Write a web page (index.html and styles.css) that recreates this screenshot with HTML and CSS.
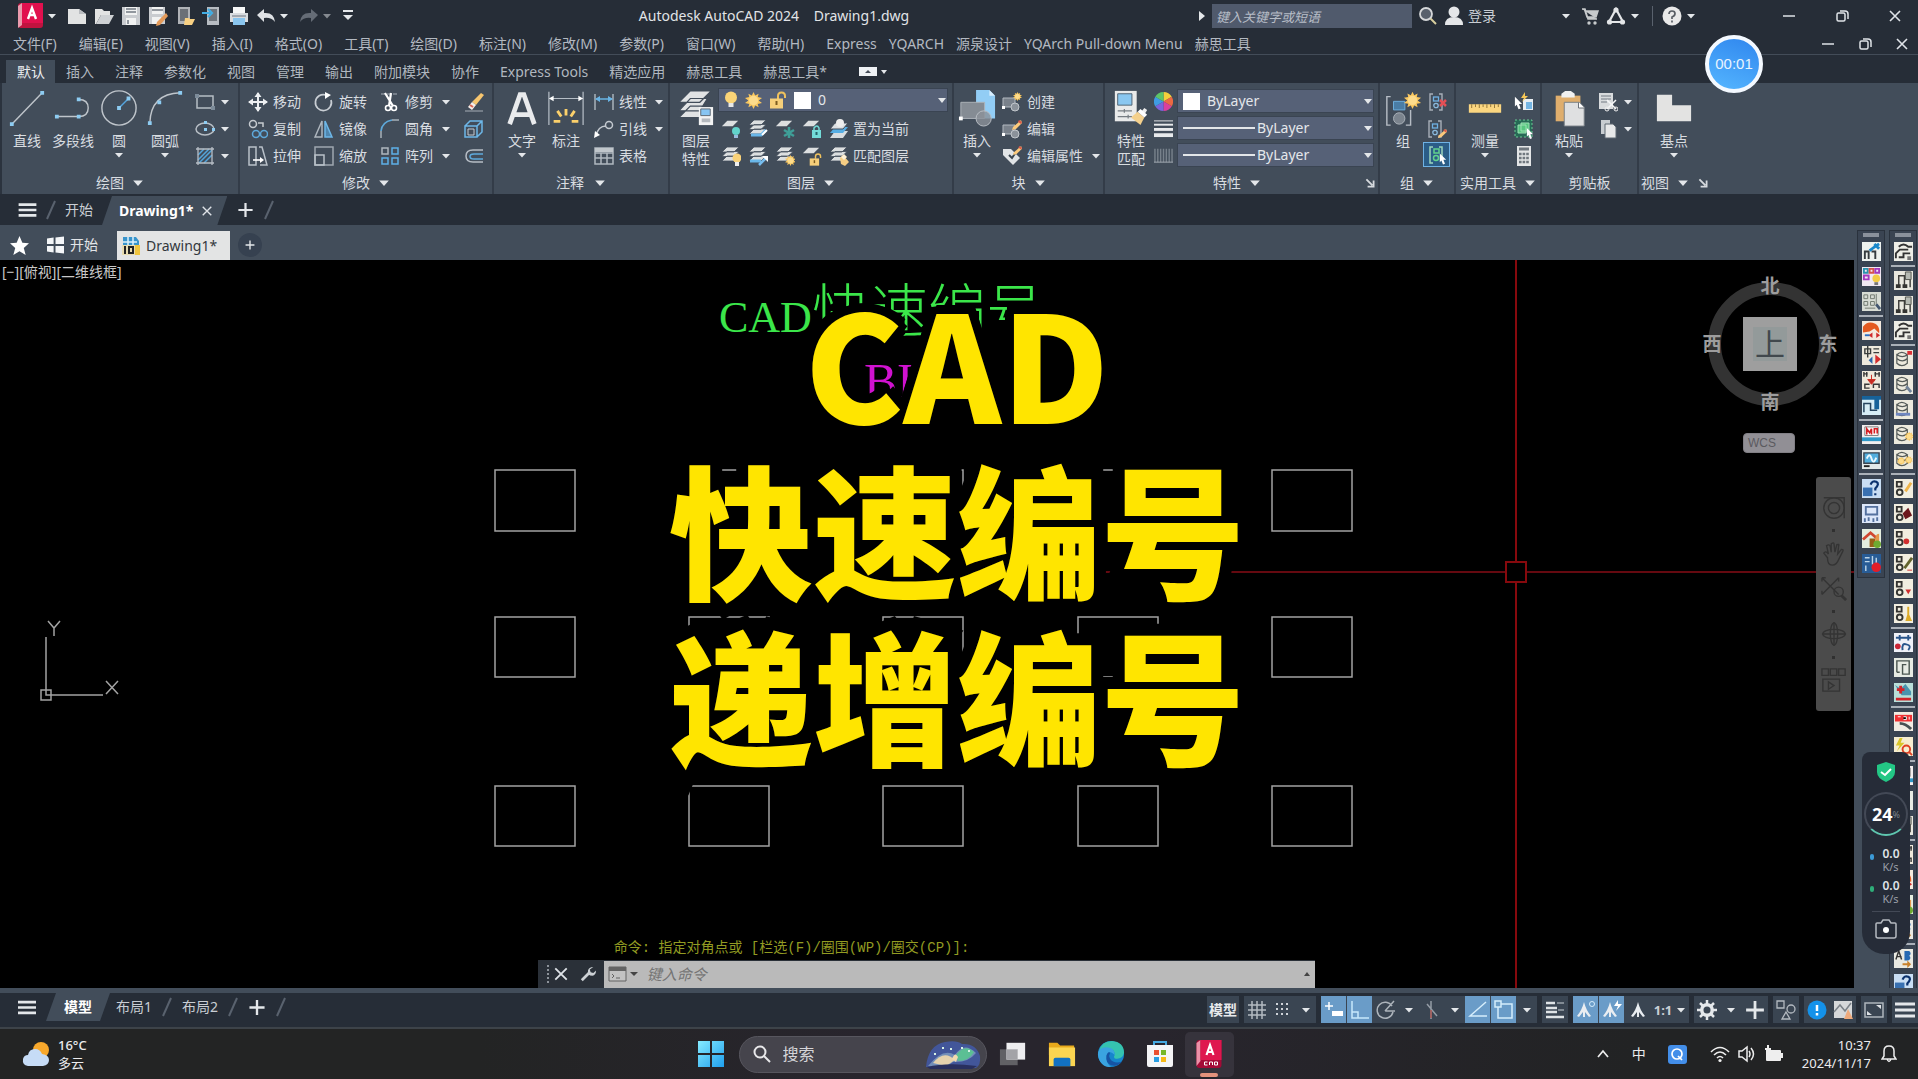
FILE: index.html
```html
<!DOCTYPE html>
<html lang="zh-CN">
<head>
	<meta charset="UTF-8">
	<meta name="viewport" content="width=device-width, initial-scale=1.0">
	<title>Autodesk AutoCAD 2024 - Drawing1.dwg</title>
	<link rel="stylesheet" href="styles.css">
</head>
<body>
	<!-- shared icon shapes -->
	<svg class="defs" width="0" height="0" aria-hidden="true">
		<symbol id="caret" viewBox="0 0 10 10"><path d="M1 3h8L5 7.500z" fill="#e4e7ea"/></symbol>
		<symbol id="plus" viewBox="0 0 18 18"><path d="M9 1v16M1 9h16" stroke="#e4e7ea" stroke-width="2.500"/></symbol>
		<symbol id="bars" viewBox="0 0 20 18"><path d="M0 3h20M0 9h20M0 15h20" stroke="#e4e7ea" stroke-width="3"/></symbol>
		<symbol id="slash" viewBox="0 0 10 20"><path d="M9 1L1 19" stroke="#59626e" stroke-width="2"/></symbol>
		<symbol id="cross" viewBox="0 0 14 14"><path d="M2 2l10 10M12 2L2 12" stroke="#dfe3e8" stroke-width="1.600"/></symbol>
		<symbol id="min" viewBox="0 0 14 14"><path d="M1 7h12" stroke="#dfe3e8" stroke-width="1.500"/></symbol>
		<symbol id="restore" viewBox="0 0 14 14"><rect x="2" y="4" width="8" height="8" rx="1.500" fill="none" stroke="#dfe3e8" stroke-width="1.500"/><path d="M5 2h5q3 0 3 3v5" fill="none" stroke="#dfe3e8" stroke-width="1.500"/></symbol>
		<symbol id="launch" viewBox="0 0 10 10"><path d="M2 2l5 5M8 3v5H3" fill="none" stroke="#d6dade" stroke-width="1.500"/></symbol>
		<symbol id="glass" viewBox="0 0 20 20"><circle cx="8" cy="8" r="6" fill="#59616d" stroke="#d6d8da" stroke-width="1.800"/><path d="M12.500 12.500L18 18" stroke="#d9cf9f" stroke-width="2"/></symbol>
		<symbol id="sheets" viewBox="0 0 20 20"><path d="M6 1h12l-5 5H1zM6 5.500h12l-5 5H1zM6 10h12l-5 5H1z" fill="#dcdfe0" stroke="#424d5a" stroke-width=".8"/></symbol>
		<symbol id="sheet" viewBox="0 0 20 20"><path d="M7 2h12l-6 6H1z" fill="#dcdfe0"/></symbol>
		<symbol id="bulb" viewBox="0 0 14 18"><circle cx="7" cy="6.500" r="6" fill="#fbd477"/><path d="M4.500 12h5v4h-5z" fill="#e8e8e8"/></symbol>
		<symbol id="sun" viewBox="0 0 20 20"><path d="M10 0l2 4 4-2-1 4 5 1-4 3 4 3-5 1 1 4-4-2-2 4-2-4-4 2 1-4-5-1 4-3-4-3 5-1-1-4 4 2z" fill="#f9c75f"/><circle cx="10" cy="10" r="5.500" fill="#fddc8c"/></symbol>
		<symbol id="lock" viewBox="0 0 18 18"><path d="M9 8V5q0-3.500 3.500-3.500T16 5v2" fill="none" stroke="#f0c25d" stroke-width="2"/><rect x="1" y="7.500" width="13" height="10" fill="#f6cf7a"/><path d="M7.500 10v4" stroke="#7c5b1f" stroke-width="2"/></symbol>
		<symbol id="pen" viewBox="0 0 10 10"><path d="M9 0L10 3 4 9 0 10 1 7z" fill="#fbc97b"/><path d="M7 0l3 2-1 2-3-2z" fill="#d95a4a"/></symbol>
		<symbol id="grp" viewBox="0 0 14 18"><path d="M4 1H1v16h3M10 1h3v16h-3" fill="none" stroke="#a8afb8" stroke-width="1.400"/><rect x="4.500" y="4" width="5" height="4" fill="none" stroke="#6fb0e2" stroke-width="1.300"/><circle cx="7" cy="12.500" r="2.200" fill="none" stroke="#8ab9dd" stroke-width="1.300"/></symbol>
		<symbol id="cursor" viewBox="0 0 10 14"><path d="M1 0l8 8H5.500l2 5-2.500 1-2-5L1 11z" fill="#fff"/></symbol>
		<symbol id="annot" viewBox="0 0 20 20"><path d="M10 2q2 8 7 14l-2 1-4-5v5H9v-5l-4 5-2-1q5-6 7-14z" fill="#e9edf1"/></symbol>
		<!-- plugin toolbar glyphs -->
		<symbol id="t-trim" viewBox="0 0 20 20"><path d="M0 0h20v20H0z" fill="#eef2ee"/><path d="M3 18v-8h4v8M10 10h4v8" stroke="#353b3e" stroke-width="2" fill="none"/><path d="M8 9q4-3 10-7M13 2l5 5" stroke="#1787ca" stroke-width="3"/></symbol>
		<symbol id="t-colors" viewBox="0 0 20 20"><path d="M0 0h20v20H0z" fill="#f1e9f3"/><path d="M2 2h4v4H2z" stroke="#2a93ad" stroke-width="2" fill="none"/><path d="M8 2h4v4H8z" stroke="#d6524a" stroke-width="2" fill="none"/><path d="M14 2h4v4h-4zM2 9h5v4H2z" stroke="#a339be" stroke-width="2" fill="none"/><circle cx="15" cy="12" r="4" fill="#f2cb45"/><path d="M13 16h4v3h-4z" fill="#777"/></symbol>
		<symbol id="t-grid" viewBox="0 0 20 20"><path d="M0 0h20v20H0z" fill="#d8dcd4"/><path d="M2 3h4v4H2zM9 3h4v4H9zM2 10h4v4H2zM9 10h4v4H9zM15 2v12M3 17h11" stroke="#70786f" fill="none"/><path d="M15 13l4 5" stroke="#43566f" stroke-width="3"/></symbol>
		<symbol id="t-orange" viewBox="0 0 20 20"><path d="M0 0h20v20H0z" fill="#f4eade"/><path d="M1 12V6q5-7 13-3 5 3 4 10l-5-5-5 3z" fill="#e45a20"/><path d="M7 15l4-3v6zM19 15l-4-3v6z" fill="#cf2b2b"/><path d="M3 15h5" stroke="#286fc4" stroke-width="2"/></symbol>
		<symbol id="t-move" viewBox="0 0 20 20"><path d="M0 0h20v20H0z" fill="#eee9dd"/><path d="M3 3h6v5H3zM6 0v12M12 3h6M12 7h6" stroke="#3a3d3c" stroke-width="1.500" fill="none"/><path d="M7 15l4-4v8z" fill="#2b64aa"/><path d="M20 14l-6-5v10z" fill="#d32d2d"/></symbol>
		<symbol id="t-down" viewBox="0 0 20 20"><path d="M0 0h20v20H0z" fill="#efe9db"/><path d="M2 1v5M5 1v5M14 1v5M18 1v5M2 3h4M13 3h6M8 14H3v4h5M12 18v-4h6v4" stroke="#383838" stroke-width="1.500" fill="none"/><path d="M10 4v7M6 9h8l-4 5z" stroke="#c92c22" fill="#c92c22"/></symbol>
		<symbol id="t-window" viewBox="0 0 20 20"><path d="M0 0h20v20H0z" fill="#d7edf6"/><path d="M0 0h20v4H0zM13 4h5v10h-5z" fill="#17629a"/><path d="M2 17V8h7v7h7" stroke="#27455f" stroke-width="1.600" fill="none"/></symbol>
		<symbol id="t-text" viewBox="0 0 20 20"><path d="M0 0h20v20H0z" fill="#f3eeee"/><path d="M3 2h14v9H3z" stroke="#777" fill="#fff"/><path d="M5 10V4l3 4 2-4v6M13 9V4h3v5" stroke="#d51f24" stroke-width="1.700" fill="none"/><path d="M0 15h20" stroke="#2e98c8" stroke-width="4"/></symbol>
		<symbol id="t-screen" viewBox="0 0 20 20"><path d="M0 0h20v20H0z" fill="#e4e9e9"/><path d="M2 3h16v11H2z" fill="#51aede" stroke="#3a4450" stroke-width="1.500"/><path d="M5 9q3-7 5 0t5-1" stroke="#e8f8ff" fill="none" stroke-width="2"/><path d="M2 17h6" stroke="#222" stroke-width="2"/></symbol>
		<symbol id="t-help" viewBox="0 0 20 20"><path d="M0 0h20v20H0z" fill="#c9def4"/><path d="M1 9h10v9H1z" fill="#3870b1"/><path d="M9 6q2-5 6-3t-1 7v2M14 15v2" stroke="#0b326e" stroke-width="2.300" fill="none"/></symbol>
		<symbol id="t-board" viewBox="0 0 20 20"><path d="M0 0h20v20H0z" fill="#dce7fa"/><path d="M4 3h12v8H4zM7 14v4M3 15v4M12 15v4M16 14v4" stroke="#54719f" stroke-width="2" fill="none"/></symbol>
		<symbol id="t-house" viewBox="0 0 20 20"><path d="M0 0h20v20H0z" fill="#e5eee0"/><path d="M1 11L9 4l8 7" stroke="#d14832" stroke-width="3" fill="none"/><path d="M8 10h6v9H8z" fill="#986019"/><path d="M14 14q-1-9 4-9v8" fill="#e5964a"/><circle cx="16" cy="16" r="4" fill="#6eaa31"/></symbol>
		<symbol id="t-record" viewBox="0 0 20 20"><path d="M0 0h20v20H0z" fill="#285c96"/><path d="M3 4h5M3 8h5M11 2v9M15 4v7M4 12v6" stroke="#bdd6e9" stroke-width="1.500"/><circle cx="15" cy="14" r="5" fill="#e21d28"/></symbol>
		<symbol id="t-link" viewBox="0 0 20 20"><path d="M0 0h20v20H0z" fill="#eeeee7"/><path d="M5 5q5-5 10 0h4M15 8H6l-4 4v5M17 12h-7v4H5" fill="none" stroke="#333" stroke-width="2"/><path d="M14 15h4v4h-4z" fill="#777"/></symbol>
		<symbol id="t-nodes" viewBox="0 0 20 20"><path d="M0 0h20v20H0z" fill="#e9e8df"/><path d="M5 16V5h6v10M11 8h6v9" fill="none" stroke="#3c3c39" stroke-width="1.500"/><path d="M2 14h5v4H2zM9 14h5v4H9z" fill="#343431"/><path d="M12 1h6v8h-6z" fill="#b5b9b2" stroke="#53554e"/></symbol>
		<symbol id="t-layers" viewBox="0 0 20 20"><path d="M0 0h20v20H0z" fill="#edeade"/><path d="M3 5q5-5 11 0-5 4-11 0v9q5 5 11 0V5M3 9q6 5 11 0" fill="none" stroke="#555b59" stroke-width="1.300"/></symbol>
		<symbol id="t-pair" viewBox="0 0 20 20"><path d="M0 0h20v20H0z" fill="#f2eee0"/><path d="M3 3h5v5H3z" fill="none" stroke="#343330" stroke-width="2"/><circle cx="6" cy="14" r="3" fill="none" stroke="#353531" stroke-width="2"/></symbol>
		<symbol id="t-blue" viewBox="0 0 20 20"><path d="M0 0h20v20H0z" fill="#eff1f8"/><path d="M2 5h16M6 2v6M15 2v6M9 18q-1-8 4-6 6 1 2 6" fill="none" stroke="#29558b" stroke-width="2"/><circle cx="4" cy="14" r="3" fill="#ca2637"/></symbol>
		<symbol id="t-rects" viewBox="0 0 20 20"><path d="M0 0h20v20H0z" fill="#e7ebe3"/><path d="M3 15V3h13v14H9V7h4M3 15h3" fill="none" stroke="#4b5650" stroke-width="1.500"/></symbol>
		<symbol id="t-map" viewBox="0 0 20 20"><path d="M0 0h20v20H0z" fill="#b9dfd9"/><path d="M1 2l6 4 5-5 6 8v4H8z" fill="#4a93ae"/><path d="M3 7h8M7 3v8M2 17h16" stroke="#d1242b" stroke-width="3"/></symbol>
		<symbol id="t-com" viewBox="0 0 20 20"><path d="M0 0h20v20H0z" fill="#f1ece3"/><path d="M1 3h18v7H1z" fill="#ef3033"/><path d="M4 5h3M10 5h3v3h-3M16 8V5" stroke="#fff"/><path d="M6 12q6 0 12 6" stroke="#485052" stroke-width="3" fill="none"/></symbol>
		<symbol id="t-find" viewBox="0 0 20 20"><path d="M0 0h20v20H0z" fill="#f6edcf"/><path d="M6 1l-4 8h4l-3 6 8-9H7l2-5" fill="#d9c628"/><circle cx="13" cy="13" r="4" fill="none" stroke="#e04022" stroke-width="2"/><path d="M16 16l3 3" stroke="#e04022" stroke-width="2"/></symbol>
		<symbol id="t-ab" viewBox="0 0 20 20"><path d="M0 0h20v20H0z" fill="#e9e9e2"/><path d="M2 11L5 2l3 9M3 8h5" stroke="#333" stroke-width="1.500" fill="none"/><path d="M11 2h5q3 3 0 5 3 3-1 5h-4z" fill="#2669b3"/><path d="M9 15h5v-3l4 4-4 4v-3H9z" fill="#c8812c"/></symbol>
	</svg>

	<header>
		<div class="titlebar">
			<div class="quick">
				<button class="logo" aria-label="应用程序菜单"><svg width="26" height="26" viewBox="0 0 26 26"><path d="M0 3Q0 0 3 0h22v22q0 3-3 3H3q-3 0-3-3z" fill="#c0133f"/><path d="M0 3l4-3v22l-4 3z" fill="#ea9bad"/><path d="M4 0h21v20H4z" fill="#e1104e"/><path d="M10 16l4-11 4 11M11 12h6" stroke="#fff" stroke-width="2.400" fill="none"/></svg></button>
				<svg class="caret"><use href="#caret"/></svg>
				<button aria-label="新建"><svg viewBox="0 0 20 20"><path d="M1 3h11l7 5v10H1z" fill="#e2e3e3"/><path d="M12 3v5h7" fill="#b9bcc0"/></svg></button>
				<button aria-label="打开"><svg viewBox="0 0 20 20"><path d="M1 3h7l2 2h6v4H7l-5 9H1z" fill="#e2e3e3"/><path d="M7 9h13l-5 9H2z" fill="#ced1d4"/></svg></button>
				<button aria-label="保存"><svg viewBox="0 0 20 20"><path d="M1 1h18v18H1z" fill="#c9ccd0"/><path d="M4 1h12v8H4zM5 12h10v7H5z" fill="#f1f2f2"/><path d="M5 3h10M5 6h10M7 14v4" stroke="#727982" stroke-width="1.500"/></svg></button>
				<button aria-label="另存为"><svg viewBox="0 0 20 20"><path d="M1 1h16v17H1z" fill="#c9ccd0"/><path d="M4 1h11v7H4zM4 11h9v7H4z" fill="#f1f2f2"/><path d="M4 4h11" stroke="#727982" stroke-width="1.500"/><path d="M18 7l2 3-8 9-4 1 1-4z" fill="#e49a59"/></svg></button>
				<button aria-label="打开云文件"><svg viewBox="0 0 20 20"><path d="M3 1h12v17H3z" fill="#b0b3b7"/><path d="M5 3h8v12H5z" fill="#6b7077"/><path d="M10 12h4l1 1h5l-3 6h-8z" fill="#f7d083"/></svg></button>
				<button aria-label="保存到云"><svg viewBox="0 0 20 20"><path d="M5 1h12v18H5z" fill="#b7bcc2"/><path d="M7 3h8v12H7z" fill="#70767d"/><path d="M0 7h8M6 3l4 4-4 4" stroke="#42aee4" stroke-width="2.200" fill="none"/></svg></button>
				<button aria-label="打印"><svg viewBox="0 0 20 20"><path d="M4 1h12v6H4z" fill="#f6f7f7"/><path d="M1 7h18v9H1z" fill="#d9dcdf"/><path d="M4 12h12v7H4z" fill="#8ac5ee"/><path d="M3 10h14" stroke="#6d7580"/></svg></button>
				<button aria-label="放弃"><svg viewBox="0 0 20 20"><path d="M8 3v4q10-1 11 9-4-5-11-4v4L1 9z" fill="#dfe2e5"/></svg></button>
				<svg class="caret"><use href="#caret"/></svg>
				<button aria-label="重做"><svg viewBox="0 0 20 20"><path d="M12 3v4Q2 6 1 16q4-5 11-4v4l7-7z" fill="#656c76"/></svg></button>
				<svg class="caret dim"><use href="#caret"/></svg>
				<svg width="12" height="14" viewBox="0 0 12 14"><path d="M1 2h10" stroke="#e4e7ea" stroke-width="2"/><path d="M1 6h10l-5 5z" fill="#e4e7ea"/></svg>
			</div>
			<div class="title">Autodesk AutoCAD 2024 &nbsp;&nbsp; Drawing1.dwg</div>
			<div class="infocenter">
				<svg width="8" height="12" viewBox="0 0 8 12"><path d="M1 1l6 5-6 5z" fill="#e4e7ea"/></svg>
				<input class="help-search" type="text" placeholder="键入关键字或短语" aria-label="搜索帮助">
				<button aria-label="搜索"><svg><use href="#glass"/></svg></button>
				<button class="login"><svg viewBox="0 0 20 20"><circle cx="10" cy="6" r="5.500" fill="#e4e6e8"/><path d="M1 19q0-8 9-8t9 8z" fill="#e4e6e8"/></svg>登录</button>
				<svg class="caret push"><use href="#caret"/></svg>
				<button aria-label="购物车"><svg viewBox="0 0 20 20"><path d="M2 3h3l3 10h9M5 5h13l-2 6H7z" fill="#c7cacc" stroke="#c7cacc" stroke-width="1.500"/><circle cx="9" cy="17" r="1.700" fill="#c7cacc"/><circle cx="15" cy="17" r="1.700" fill="#c7cacc"/></svg></button>
				<button aria-label="Autodesk App Store"><svg viewBox="0 0 20 20"><path d="M10 3L3 16h14z" fill="none" stroke="#e4e6e8" stroke-width="2.200"/><circle cx="10" cy="4" r="2.600" fill="#e4e6e8"/><circle cx="3.500" cy="16" r="2.600" fill="#e4e6e8"/><circle cx="16.500" cy="16" r="2.600" fill="#e4e6e8"/></svg></button>
				<svg class="caret"><use href="#caret"/></svg>
				<span class="vline"></span>
				<button aria-label="帮助"><svg viewBox="0 0 20 20"><circle cx="10" cy="10" r="9.500" fill="#e9e9e9"/><path d="M7 8q0-3 3-3t3 2.500-3 3.500v2M10 14.500v2" stroke="#585d64" stroke-width="1.700" fill="none"/></svg></button>
				<svg class="caret"><use href="#caret"/></svg>
			</div>
			<div class="winctl">
				<button aria-label="最小化"><svg><use href="#min"/></svg></button>
				<button aria-label="还原"><svg><use href="#restore"/></svg></button>
				<button aria-label="关闭"><svg><use href="#cross"/></svg></button>
			</div>
		</div>

		<nav class="menubar">
			<a href="#">文件(F)</a><a href="#">编辑(E)</a><a href="#">视图(V)</a><a href="#">插入(I)</a><a href="#">格式(O)</a><a href="#">工具(T)</a><a href="#">绘图(D)</a><a href="#">标注(N)</a><a href="#">修改(M)</a><a href="#">参数(P)</a><a href="#">窗口(W)</a><a href="#">帮助(H)</a><a href="#" class="tight">Express</a><a href="#" class="tight">YQARCH</a><a href="#" class="tight">源泉设计</a><a href="#" class="tight">YQArch Pull-down Menu</a><a href="#" class="tight">赫思工具</a>
			<div class="docctl">
				<button aria-label="最小化图形"><svg><use href="#min"/></svg></button>
				<button aria-label="还原图形"><svg><use href="#restore"/></svg></button>
				<button aria-label="关闭图形"><svg><use href="#cross"/></svg></button>
			</div>
		</nav>

		<nav class="tabs">
			<a href="#" class="active">默认</a><a href="#">插入</a><a href="#">注释</a><a href="#">参数化</a><a href="#">视图</a><a href="#">管理</a><a href="#">输出</a><a href="#">附加模块</a><a href="#">协作</a><a href="#">Express Tools</a><a href="#">精选应用</a><a href="#">赫思工具</a><a href="#">赫思工具*</a>
			<button class="collapse" aria-label="最小化功能区"><svg width="30" height="10" viewBox="0 0 30 10"><path d="M0 0h18v9H0z" fill="#eef1f4"/><path d="M6 6l3-3 3 3z" fill="#454d58"/><path d="M22 3h6l-3 4z" fill="#e4e7ea"/></svg></button>
		</nav>

		<div class="ribbon">
			<section class="panel p-draw">
				<div class="body">
					<button class="big"><svg viewBox="0 0 40 40"><path d="M4 37L36 4" stroke="#bfc5cb" stroke-width="1.500"/><path d="M2 35h4v4H2zM34 2h4v4h-4z" fill="#8dccf2"/></svg>直线</button>
					<button class="big"><svg viewBox="0 0 40 40"><path d="M3 29h23q10 0 10-9t-10-9" stroke="#bfc5cb" stroke-width="1.500" fill="none"/><path d="M1 27h4v4H1zM24 27h4v4h-4zM24 9h4v4h-4z" fill="#8dccf2"/></svg>多段线</button>
					<button class="big"><svg viewBox="0 0 40 40"><circle cx="20" cy="20" r="18" stroke="#bfc5cb" stroke-width="1.500" fill="none"/><path d="M20 20L30 10" stroke="#54a6df" stroke-width="1.500"/><path d="M18 18h4v4h-4zM28 8h4v4h-4z" fill="#8dccf2"/></svg>圆<svg class="caret"><use href="#caret"/></svg></button>
					<button class="big"><svg viewBox="0 0 40 40"><path d="M4 36Q5 5 36 4" stroke="#bfc5cb" stroke-width="1.500" fill="none"/><path d="M2 34h4v4H2zM12 12h4v4h-4zM34 2h4v4h-4z" fill="#8dccf2"/></svg>圆弧<svg class="caret"><use href="#caret"/></svg></button>
					<div class="rows r-icons">
						<button aria-label="矩形"><svg viewBox="0 0 20 20"><path d="M2 4h16v12H2z" fill="none" stroke="#b7bec5" stroke-width="1.500"/><path d="M0 2h4v4H0zM16 14h4v4h-4z" fill="#7c8b99"/></svg><svg class="caret"><use href="#caret"/></svg></button>
						<button aria-label="椭圆"><svg viewBox="0 0 20 20"><ellipse cx="10" cy="10" rx="9" ry="6" fill="none" stroke="#b7bec5" stroke-width="1.500"/><path d="M9 9h3v3H9zM9 2h3v3H9zM17 9h3v3h-3z" fill="#8dccf2"/></svg><svg class="caret"><use href="#caret"/></svg></button>
						<button aria-label="图案填充"><svg viewBox="0 0 20 20"><path d="M3 9l6-6M3 14L14 3M4 17L17 4M9 17l8-8" stroke="#53a5db" stroke-width="1.500"/><path d="M1 3h18M1 17h18M3 1v18M17 1v18" stroke="#b7bec5" stroke-width="1.300"/></svg><svg class="caret"><use href="#caret"/></svg></button>
					</div>
				</div>
				<h2>绘图<svg class="caret"><use href="#caret"/></svg></h2>
			</section>

			<section class="panel p-modify">
				<div class="body">
					<div class="rows">
						<button><svg viewBox="0 0 20 20"><path d="M10 1v18M1 10h18" stroke="#eef0f2" stroke-width="2"/><path d="M6.500 5L10 0l3.500 5zM6.500 15l3.500 5 3.500-5zM5 6.500L0 10l5 3.500zM15 6.500l5 3.500-5 3.500z" fill="#eef0f2"/></svg>移动</button>
						<button><svg viewBox="0 0 20 20"><circle cx="5" cy="5" r="3.500" fill="none" stroke="#c6cbd0" stroke-width="1.500"/><path d="M10 4h5v4" stroke="#c6cbd0" stroke-width="1.500" fill="none"/><circle cx="8" cy="15" r="3.500" fill="none" stroke="#5ea9db" stroke-width="1.500"/><circle cx="16" cy="15" r="3.500" fill="none" stroke="#5ea9db" stroke-width="1.500"/></svg>复制</button>
						<button><svg viewBox="0 0 20 20"><path d="M1 1h7v18H1zM11 1h3l5 18h-7" fill="none" stroke="#b9c1c9" stroke-width="1.500"/><path d="M5 14h8" stroke="#fff" stroke-width="1.600"/><path d="M12 11l4 3-4 3z" fill="#fff"/></svg>拉伸</button>
					</div>
					<div class="rows">
						<button><svg viewBox="0 0 20 20"><path d="M12 3a8 8 0 1 0 5 5" fill="none" stroke="#c9ced4" stroke-width="1.700"/><path d="M11 0l6 3-6 4z" fill="#fff"/></svg>旋转</button>
						<button><svg viewBox="0 0 20 20"><path d="M8 2v16H1z" fill="none" stroke="#aeb6be" stroke-width="1.500"/><path d="M11 2v16h7z" fill="#4f86ae" stroke="#6eb7e7" stroke-width="1.500"/></svg>镜像</button>
						<button><svg viewBox="0 0 20 20"><path d="M1 1h18v18H1z" fill="none" stroke="#9ea7b0" stroke-width="1.500"/><path d="M1 9h9v10H1z" fill="none" stroke="#b9c1c9" stroke-width="1.500"/></svg>缩放</button>
					</div>
					<div class="rows r-wide">
						<button><svg viewBox="0 0 20 20"><path d="M1 2h18" stroke="#a8b0b8" stroke-dasharray="4 2"/><path d="M5 1l8 13M11 1L9 14" stroke="#fff" stroke-width="2.200"/><circle cx="8" cy="16" r="2.500" fill="none" stroke="#fff" stroke-width="1.600"/><circle cx="14" cy="16" r="2.500" fill="none" stroke="#fff" stroke-width="1.600"/></svg>修剪<svg class="caret"><use href="#caret"/></svg></button>
						<button><svg viewBox="0 0 20 20"><path d="M1 19v-7" stroke="#a9b2ba" stroke-width="1.500"/><path d="M1 12Q2 3 12 1" fill="none" stroke="#5ea9db" stroke-width="1.700"/><path d="M12 1h7" stroke="#a9b2ba" stroke-width="1.500"/></svg>圆角<svg class="caret"><use href="#caret"/></svg></button>
						<button><svg viewBox="0 0 20 20"><path d="M2 2h6v6H2z" fill="none" stroke="#aeb6be" stroke-width="1.500"/><path d="M12 2h6v6h-6zM2 12h6v6H2zM12 12h6v6h-6z" fill="none" stroke="#5eb0e8" stroke-width="1.500"/></svg>阵列<svg class="caret"><use href="#caret"/></svg></button>
					</div>
					<div class="rows">
						<button aria-label="删除"><svg viewBox="0 0 20 20"><path d="M17 1l3 2-8 10-4-3z" fill="#f7c66f"/><path d="M8 10l4 3-4 5-4-3z" fill="#f6eee9"/><path d="M6 13l3 2" stroke="#db6552" stroke-width="2"/><path d="M1 19h18" stroke="#a6aeb5"/></svg></button>
						<button aria-label="分解"><svg viewBox="0 0 20 20"><path d="M1 7h12v11H1zM1 7l5-5h12v11l-5 5M13 7l5-5" fill="none" stroke="#6db7e8" stroke-width="1.500"/><path d="M4 10h6v6H4z" fill="none" stroke="#c4c9ce"/></svg></button>
						<button aria-label="偏移"><svg viewBox="0 0 20 20"><path d="M19 4H9q-7 0-7 6t7 6h10" fill="none" stroke="#b6bdc5" stroke-width="1.500"/><path d="M19 8h-9q-4 0-4 2.500t4 2.500h9" fill="none" stroke="#5ea9db" stroke-width="1.500"/></svg></button>
					</div>
				</div>
				<h2>修改<svg class="caret"><use href="#caret"/></svg></h2>
			</section>

			<section class="panel p-annot">
				<div class="body">
					<button class="big"><svg viewBox="0 0 40 40"><path d="M7 37L18 6h4l11 31M12 27h16" fill="none" stroke="#e9ebed" stroke-width="5"/></svg>文字<svg class="caret"><use href="#caret"/></svg></button>
					<button class="big"><svg viewBox="0 0 40 40"><path d="M2 3v35M38 3v35M3 10h34" stroke="#b6bec6" stroke-width="1.300"/><path d="M2 10l5-3v6zM38 10l-5-3v6z" fill="#fff"/><path d="M20 21v7M11 23l4 6M29 23l-4 6M7 34h7M33 34h-7" stroke="#fbd06b" stroke-width="3"/></svg>标注</button>
					<div class="rows r-wide">
						<button><svg viewBox="0 0 20 20"><path d="M1 2v16M19 2v16" stroke="#a9b2ba" stroke-width="1.500"/><path d="M2 7h16" stroke="#69b4e5" stroke-width="1.500"/><path d="M1 7l5-3v6zM19 7l-5-3v6z" fill="#69b4e5"/></svg>线性<svg class="caret"><use href="#caret"/></svg></button>
						<button><svg viewBox="0 0 20 20"><path d="M2 17q2-10 10-10" fill="none" stroke="#c4cad0" stroke-width="1.500"/><circle cx="15" cy="6" r="3.500" fill="none" stroke="#c4cad0" stroke-width="1.500"/><path d="M0 19l1-7 5 4z" fill="#fff"/></svg>引线<svg class="caret"><use href="#caret"/></svg></button>
						<button><svg viewBox="0 0 20 20"><path d="M1 2h18v16H1zM1 7h18M7 7v11M13 7v11M1 12h18" fill="none" stroke="#b0b8c0" stroke-width="1.500"/><path d="M1 2h18v4H1z" fill="#c0c6cb"/></svg>表格</button>
					</div>
				</div>
				<h2>注释<svg class="caret"><use href="#caret"/></svg></h2>
			</section>

			<section class="panel p-layer">
				<div class="body">
					<button class="big"><svg viewBox="0 0 40 40"><path d="M14 2h22L24 14H2zM14 10h18L24 23H2zM14 18h14l-4 12H2z" fill="#e1e3e4" stroke="#424d5a" stroke-width="1.300"/><path d="M23 19h15v19H23z" fill="#f2f3f3"/><path d="M25 21h10v7H25z" fill="#87c5f2" stroke="#5e6873"/><path d="M26 31h9v4h-9z" fill="#b4b9be"/></svg>图层<br>特性</button>
					<div class="layer-tools">
						<div class="combo">
							<svg width="14" height="18"><use href="#bulb"/></svg><svg width="17" height="17"><use href="#sun"/></svg><svg width="18" height="18"><use href="#lock"/></svg><span class="swatch"></span>
							<select aria-label="图层"><option>0</option></select>
						</div>
						<div class="iconrow">
							<button aria-label="关闭图层"><svg viewBox="0 0 20 20"><use href="#sheet" width="18" height="18"/><circle cx="15" cy="12" r="4" fill="#62d3cb"/><path d="M13 16h4v3h-4z" fill="#9bd"/></svg></button>
							<button aria-label="隔离图层"><svg viewBox="0 0 20 20"><use href="#sheets"/><path d="M3 16h10l5-5" stroke="#69b7e9" stroke-width="3" fill="none"/><path d="M19 11l-5 5" stroke="#fff" stroke-width="2"/></svg></button>
							<button aria-label="冻结图层"><svg viewBox="0 0 20 20"><use href="#sheet" width="18" height="18"/><path d="M14 8v11M9 11l10 6M19 11L9 17" stroke="#3f9f98" stroke-width="2.500"/></svg></button>
							<button aria-label="锁定图层"><svg viewBox="0 0 20 20"><use href="#sheet" width="18" height="18"/><path d="M12 12V9q3-4 5 0v3" stroke="#73dcd9" stroke-width="1.500" fill="none"/><path d="M10 11h9v8h-9z" fill="#73dcd9"/><path d="M14.500 13v3" stroke="#24666a" stroke-width="2"/></svg></button>
							<button><svg viewBox="0 0 20 20"><path d="M6 12h13l-5 7H1z" fill="#d9dde0"/><path d="M6 8h13l-5 6H1z" fill="#57aee4"/><path d="M6 4h13l-5 6H1z" fill="#dce0e3" stroke="#424d5a"/><circle cx="11" cy="4" r="4" fill="#ededed"/></svg>置为当前</button>
						</div>
						<div class="iconrow">
							<button aria-label="打开所有图层"><svg viewBox="0 0 20 20"><use href="#sheets"/><circle cx="16" cy="12" r="4.500" fill="#f9d279"/><path d="M14 16h4v4h-4z" fill="#eee"/></svg></button>
							<button aria-label="取消隔离"><svg viewBox="0 0 20 20"><use href="#sheets"/><path d="M2 15h11" stroke="#69b7e9" stroke-width="3"/><path d="M11 19l8-8" stroke="#77bdee" stroke-width="2.500"/><path d="M14 10h6v6z" fill="#fff"/></svg></button>
							<button aria-label="解冻图层"><svg viewBox="0 0 20 20"><use href="#sheets"/><use href="#sun" x="10" y="9" width="11" height="11"/></svg></button>
							<button aria-label="解锁图层"><svg viewBox="0 0 20 20"><use href="#sheet" width="18" height="18"/><use href="#lock" x="7" y="7" width="13" height="13"/></svg></button>
							<button><svg viewBox="0 0 20 20"><use href="#sheets"/><path d="M11 12l3-3 6 7-4 4-4-2z" fill="#f6ce84"/><path d="M12 11l3-3 3 3-3 3z" fill="#fff1d6"/></svg>匹配图层</button>
						</div>
					</div>
				</div>
				<h2>图层<svg class="caret"><use href="#caret"/></svg></h2>
			</section>

			<section class="panel p-block">
				<div class="body">
					<button class="big"><svg viewBox="0 0 40 40"><path d="M19 1h14l6 6v24H19z" fill="#92cdf5"/><path d="M33 1v6h6z" fill="#d9efff"/><path d="M3 14h25v17H3z" fill="#858c94" stroke="#adb3b9"/><circle cx="27" cy="31" r="8" fill="#8b9199" fill-opacity=".8" stroke="#b9bfc5"/><path d="M1 29h4v4H1z" fill="#fff"/></svg>插入<svg class="caret"><use href="#caret"/></svg></button>
					<div class="rows r-wide">
						<button><svg viewBox="0 0 20 20"><path d="M1 6h12v9H1z" fill="#79818b" stroke="#b2b9c0"/><circle cx="13" cy="15" r="4" fill="#8b929a" stroke="#c1c6cb"/><use href="#sun" x="11" y="0" width="9" height="9"/><path d="M0 14h3v3H0z" fill="#fff"/></svg>创建</button>
						<button><svg viewBox="0 0 20 20"><path d="M1 6h12v9H1z" fill="#79818b" stroke="#b2b9c0"/><circle cx="13" cy="15" r="4" fill="#8b929a" stroke="#c1c6cb"/><use href="#pen" x="10" y="1" width="10" height="10"/><path d="M0 14h3v3H0z" fill="#fff"/></svg>编辑</button>
						<button><svg viewBox="0 0 20 20"><path d="M1 3h8l9 9-7 7L1 9z" fill="#e1e4e6"/><path d="M7 9l3 3 4-6" fill="none" stroke="#39444e" stroke-width="2"/><use href="#pen" x="11" y="0" width="9" height="9"/></svg>编辑属性<svg class="caret"><use href="#caret"/></svg></button>
					</div>
				</div>
				<h2>块<svg class="caret"><use href="#caret"/></svg></h2>
			</section>

			<section class="panel p-props">
				<div class="body">
					<button class="big"><svg viewBox="0 0 40 40"><path d="M3 2h23v32H3z" fill="#e9eaea"/><path d="M6 5h15v12H6z" fill="#8ac7f0" stroke="#4d6171"/><path d="M6 23h15M6 29h15M13 21v4M17 27v4" stroke="#777d83" stroke-width="1.300"/><path d="M30 25l4-5 3 2-3 5z" fill="#eee"/><path d="M27 24l7 6-4 8-10-8z" fill="#f4d08c"/><path d="M27 24l3-3 7 6-3 3z" fill="#fff"/></svg>特性<br>匹配</button>
					<div class="prop-grid">
						<svg class="wheel" viewBox="0 0 20 20"><path d="M10 10L10 0A10 10 0 0 1 18.700 5z" fill="#f4cf3b"/><path d="M10 10L18.700 5A10 10 0 0 1 18.700 15z" fill="#ec6942"/><path d="M10 10L18.700 15A10 10 0 0 1 10 20z" fill="#db3f9c"/><path d="M10 10V20A10 10 0 0 1 1.300 15z" fill="#7a63dc"/><path d="M10 10L1.300 15A10 10 0 0 1 1.300 5z" fill="#3f9be4"/><path d="M10 10L1.300 5A10 10 0 0 1 10 0z" fill="#5dc468"/></svg>
						<div class="combo"><span class="swatch"></span><select aria-label="颜色"><option>ByLayer</option></select></div>
						<svg viewBox="0 0 20 20"><path d="M0 2h20" stroke="#e8eaec"/><path d="M0 6h20" stroke="#e8eaec" stroke-width="2"/><path d="M0 11h20" stroke="#e8eaec" stroke-width="3"/><path d="M0 17h20" stroke="#e8eaec" stroke-width="4"/></svg>
						<div class="combo"><span class="line"></span><select aria-label="线宽"><option>ByLayer</option></select></div>
						<svg viewBox="0 0 20 20"><path d="M1 3v14M4 3v14M7 3v14M10 3v14M13 3v14M16 3v14M19 3v14" stroke="#77818b" stroke-width="1.500"/><path d="M0 17h20" stroke="#a4acb4"/></svg>
						<div class="combo"><span class="line"></span><select aria-label="线型"><option>ByLayer</option></select></div>
					</div>
				</div>
				<h2 class="corner"><span>特性<svg class="caret"><use href="#caret"/></svg></span><svg class="caret"><use href="#launch"/></svg></h2>
			</section>

			<section class="panel p-group">
				<div class="body">
					<button class="big"><svg viewBox="0 0 40 40"><path d="M7 8H3v30h4M23 38h5V22" fill="none" stroke="#b6bdc5" stroke-width="1.500"/><path d="M10 13h12v9H10z" fill="#4a7da5" stroke="#6eb0df"/><circle cx="16" cy="31" r="6" fill="#7b848e" stroke="#abb2b9"/><use href="#sun" x="21" y="3" width="18" height="18"/></svg>组</button>
					<div class="rows">
						<button aria-label="取消编组"><svg viewBox="0 0 20 20"><use href="#grp" x="2" y="1" width="14" height="18"/><path d="M13 8l6 6M19 8l-6 6" stroke="#e44f55" stroke-width="2.500"/></svg></button>
						<button aria-label="组编辑"><svg viewBox="0 0 20 20"><use href="#grp" x="1" y="1" width="14" height="18"/><use href="#pen" x="11" y="10" width="9" height="9"/></svg></button>
						<button class="on" aria-label="组选择"><svg viewBox="0 0 20 20"><path d="M6 2H3v16h3M12 2h3v10" fill="none" stroke="#9dd5bd" stroke-width="1.500"/><path d="M7 4h5v4H7z" stroke="#61d18d" stroke-width="1.500" fill="none"/><circle cx="9" cy="13" r="2.500" stroke="#61d18d" stroke-width="1.500" fill="none"/><use href="#cursor" x="12" y="8" width="8" height="12"/></svg></button>
					</div>
				</div>
				<h2>组<svg class="caret"><use href="#caret"/></svg></h2>
			</section>

			<section class="panel p-util">
				<div class="body">
					<button class="big"><svg viewBox="0 0 40 40"><path d="M3 16h34v9H3z" fill="#fbd680"/><path d="M6 16v4M10 16v3M14 16v4M18 16v3M22 16v4M26 16v3M30 16v4M34 16v3" stroke="#8f7338"/></svg>测量<svg class="caret"><use href="#caret"/></svg></button>
					<div class="rows">
						<button aria-label="快速选择"><svg viewBox="0 0 20 20"><path d="M9 7h10v11H9z" fill="#e8eef2"/><path d="M12 10h6v7h-6z" fill="#74b5e3"/><path d="M11 0L7 6h3l-2 4 6-6h-3z" fill="#f5c757"/><use href="#cursor" x="0" y="4" width="9" height="14"/></svg></button>
						<button aria-label="全部选择"><svg viewBox="0 0 20 20"><path d="M1 1h17v17H1z" fill="#266a55" stroke="#6bc994" stroke-dasharray="2 2"/><path d="M4 6h8v8H4zM7 4h8v8H7z" fill="#56c77f" stroke="#9de0b5"/><use href="#cursor" x="12" y="9" width="8" height="11"/></svg></button>
						<button aria-label="快速计算器"><svg viewBox="0 0 20 20"><path d="M3 0h14v20H3z" fill="#e3e5e6"/><path d="M5 3h10" stroke="#6f777e" stroke-width="3"/><path d="M5 8h10M5 12h10M5 16h10" stroke="#6f777e" stroke-width="2.500" stroke-dasharray="2.600 1"/></svg></button>
					</div>
				</div>
				<h2>实用工具<svg class="caret"><use href="#caret"/></svg></h2>
			</section>

			<section class="panel p-clip">
				<div class="body">
					<button class="big"><svg viewBox="0 0 40 40"><path d="M6 7h26v27H6z" fill="#dfae6d"/><path d="M12 9V5l4-3h6l4 3v4z" fill="#f0f1f1"/><path d="M15 14h16l5 5v20H15z" fill="#dfe0e1" stroke="#767d84"/><path d="M30 14v6h6" fill="#fff" stroke="#656c73"/></svg>粘贴<svg class="caret"><use href="#caret"/></svg></button>
					<div class="rows r-icons">
						<button aria-label="剪切"><svg viewBox="0 0 20 20"><path d="M1 1h14v16H1z" fill="#d8dbdd"/><path d="M3 4h10M3 7h10M3 10h6" stroke="#737b83"/><path d="M9 8l9 9M18 8l-9 9" stroke="#f5f6f7" stroke-width="1.500"/><circle cx="9" cy="17" r="2" fill="none" stroke="#eee"/><circle cx="18" cy="17" r="2" fill="none" stroke="#eee"/></svg><svg class="caret"><use href="#caret"/></svg></button>
						<button aria-label="复制剪裁"><svg viewBox="0 0 20 20"><path d="M3 1h9v14H3z" fill="#c8cdd1"/><path d="M7 5h8l3 3v11H7z" fill="#e7e8e9" stroke="#5d6771"/></svg><svg class="caret"><use href="#caret"/></svg></button>
					</div>
				</div>
				<h2>剪贴板</h2>
			</section>

			<section class="panel p-view">
				<div class="body">
					<button class="big"><svg viewBox="0 0 40 40"><path d="M2 6h16v11h20v17H2z" fill="#e3e3e2"/></svg>基点<svg class="caret"><use href="#caret"/></svg></button>
				</div>
				<h2>视图<svg class="caret"><use href="#caret"/></svg><svg class="caret"><use href="#launch"/></svg></h2>
			</section>
		</div>

		<nav class="filetabs">
			<button aria-label="文件选项卡菜单"><svg width="19" height="16"><use href="#bars"/></svg></button>
			<svg width="10" height="20"><use href="#slash"/></svg>
			<a href="#">开始</a>
			<div class="filetab"><a href="#">Drawing1*</a><button aria-label="关闭选项卡"><svg width="12" height="12"><use href="#cross"/></svg></button></div>
			<button class="addtab" aria-label="新图形"><svg width="17" height="17"><use href="#plus"/></svg></button>
			<svg width="10" height="20"><use href="#slash"/></svg>
		</nav>
	</header>

	<main>
		<div class="workspace">
			<nav class="doctabs">
				<svg width="19" height="19" viewBox="0 0 20 20"><path d="M10 0l3 7 7 .500-5.500 5L16.500 20 10 16l-6.500 4 2-7.500L0 7.500 7 7z" fill="#fff"/></svg>
				<a href="#"><svg width="17" height="18" viewBox="0 0 18 18"><path d="M0 2l7-1v7H0zM9 1l9-1v8H9zM0 10h7v7l-7-1zM9 10h9v8l-9-1z" fill="#f4f6f8"/></svg>开始</a>
				<a href="#" class="current"><svg width="18" height="18" viewBox="0 0 18 18"><path d="M1 0h13l3 4v9H1z" fill="#3994cb"/><path d="M1 5h14M6 0v8M11 0v8" stroke="#dcf1fb" stroke-width="1.500" fill="none"/><path d="M0 8h18v10H0z" fill="#e8dcb0"/><path d="M13 8h5v10h-5z" fill="#f0c53e"/><path d="M3 9v8M7 10h4v6H7z" stroke="#222" stroke-width="2" fill="none"/></svg>Drawing1*</a>
				<button aria-label="新建文档"><svg width="10" height="10"><use href="#plus"/></svg></button>
			</nav>

			<div class="canvas">
				<svg class="model" aria-hidden="true">
					<g fill="none" stroke="#a3a3a3" stroke-width="1.500">
						<rect x="495" y="210" width="80" height="61"/><rect x="689" y="210" width="80" height="61"/><rect x="883" y="210" width="80" height="61"/><rect x="1078" y="210" width="80" height="61"/><rect x="1272" y="210" width="80" height="61"/>
						<rect x="495" y="357" width="80" height="60"/><rect x="689" y="357" width="80" height="60"/><rect x="883" y="357" width="80" height="60"/><rect x="1078" y="357" width="80" height="60"/><rect x="1272" y="357" width="80" height="60"/>
						<rect x="495" y="526" width="80" height="60"/><rect x="689" y="526" width="80" height="60"/><rect x="883" y="526" width="80" height="60"/><rect x="1078" y="526" width="80" height="60"/><rect x="1272" y="526" width="80" height="60"/>
						<!-- UCS icon -->
						<path d="M46 377v58h57M41 430h10v10H41z"/>
						<path d="M48 361l6 7 6-7M54 368v8M106 421l12 13M118 421l-12 13"/>
					</g>
					<path d="M1516 0v302M1516 322v406" stroke="#86090d" stroke-width="2"/>
					<path d="M1080 312h426M1526 312h328" stroke="#650910" stroke-width="2"/>
					<rect x="1506" y="302" width="20" height="20" fill="none" stroke="#86090d" stroke-width="2"/>
				</svg>
				<p class="viewlabel">[−][俯视][二维线框]</p>
				<p class="dwg-title"><span>CAD</span>快速编号</p>
				<p class="dwg-sub">BH</p>

				<div class="viewcube">
					<b class="n">北</b><b class="w">西</b><button class="top">上</button><b class="e">东</b><b class="s">南</b>
				</div>
				<button class="wcs">WCS</button>

				<div class="navbar">
					<button aria-label="全导航控制盘"><svg viewBox="0 0 28 28"><circle cx="14" cy="14" r="11"/><circle cx="14" cy="14" r="6"/><path d="M3 3h22v22"/></svg></button>
					<i></i>
					<button aria-label="平移"><svg viewBox="0 0 28 28"><path d="M7 18L3 13q2-3 5 1L6 5q3-2 4 1l1 6V3q3-2 3 0l1 9 2-8q3-1 2 1l-1 9 4-5q3 0 1 3l-4 8q-2 6-7 6t-5-8z"/></svg></button>
					<button aria-label="缩放"><svg viewBox="0 0 28 28"><path d="M1 3l18 18M19 3L1 21M1 3v4M1 3h4M19 3v4M1 21v-4"/><circle cx="19" cy="18" r="5"/><path d="M22 22l5 5" stroke-width="3"/></svg></button>
					<i></i>
					<button aria-label="动态观察"><svg viewBox="0 0 28 28"><ellipse cx="14" cy="14" rx="12" ry="5"/><ellipse cx="14" cy="14" rx="4" ry="12"/><path d="M14 1v26M1 14h26"/></svg></button>
					<i></i>
					<button aria-label="ShowMotion"><svg viewBox="0 0 28 28"><path d="M1 2h7v7H1zM10 2h7v7h-7zM19 2h7v7h-7zM2 13h18v13H2z"/><path d="M8 16l6 4-6 4z"/></svg></button>
				</div>

				<div class="caption">
					<div class="latin">CAD</div>
					<div>快速编号</div>
					<div>递增编号</div>
				</div>

				<div class="command">
					<p>命令: 指定对角点或 [栏选(F)/圈围(WP)/圈交(CP)]:</p>
					<div class="cmdline">
						<span class="grip"></span>
						<button aria-label="关闭命令行"><svg width="14" height="14"><use href="#cross"/></svg></button>
						<button aria-label="自定义"><svg width="18" height="18" viewBox="0 0 18 18"><path d="M2 16L11 7" stroke="#ccd0d4" stroke-width="3"/><path d="M15 1l-4 3 1 3 3 1 3-3q0 5-4 6-6 0-5-6 1-4 6-4z" fill="#ccd0d4"/></svg></button>
						<label class="cmdinput">
							<svg width="19" height="16" viewBox="0 0 19 16"><path d="M1 1h17v14H1z" fill="#c2c2c2" stroke="#636363"/><path d="M1 1h17v4H1z" fill="#636363"/><path d="M4 8l2 2-2 2M8 12h4" stroke="#636363" fill="none"/></svg>
							<svg width="8" height="8" viewBox="0 0 8 8"><path d="M0 2h8L4 6z" fill="#444"/></svg>
							<input type="text" placeholder="键入命令" aria-label="命令">
							<svg width="8" height="8" viewBox="0 0 8 8"><path d="M1 6h6L4 2z" fill="#444"/></svg>
						</label>
					</div>
				</div>
			</div>
		</div>

		<aside class="sidebars">
			<div class="toolbar">
				<span class="handle"></span>
				<button aria-label="修剪"><svg><use href="#t-trim"/></svg></button><button aria-label="图层颜色"><svg><use href="#t-colors"/></svg></button><button aria-label="查找"><svg><use href="#t-grid"/></svg></button><hr>
				<button aria-label="替换"><svg><use href="#t-orange"/></svg></button><button aria-label="块移动"><svg><use href="#t-move"/></svg></button><button aria-label="下移"><svg><use href="#t-down"/></svg></button><button aria-label="窗口"><svg><use href="#t-window"/></svg></button><hr>
				<button aria-label="文字"><svg><use href="#t-text"/></svg></button><button aria-label="屏幕"><svg><use href="#t-screen"/></svg></button><hr>
				<button aria-label="帮助"><svg><use href="#t-help"/></svg></button><button aria-label="面板"><svg><use href="#t-board"/></svg></button><button aria-label="主页"><svg><use href="#t-house"/></svg></button><button aria-label="录制"><svg><use href="#t-record"/></svg></button>
			</div>
			<div class="toolbar tall">
				<span class="handle"></span>
				<button aria-label="连接"><svg><use href="#t-link"/></svg></button><hr>
				<button aria-label="节点"><svg><use href="#t-nodes"/></svg></button><button aria-label="节点块"><svg><use href="#t-nodes"/></svg></button><button aria-label="合并"><svg><use href="#t-link"/></svg></button><hr>
				<button aria-label="图层关"><svg viewBox="0 0 20 20"><use href="#t-layers"/><path d="M14 1h5v4h-5z" fill="#da3035"/></svg></button><button aria-label="图层搜索"><svg viewBox="0 0 20 20"><use href="#t-layers"/><path d="M13 12l5 6" stroke="#71839a" stroke-width="3"/></svg></button><button aria-label="图层隔离"><svg viewBox="0 0 20 20"><use href="#t-layers"/><path d="M2 15h15" stroke="#6f86c0" stroke-width="3"/></svg></button><button aria-label="图层开"><svg viewBox="0 0 20 20"><use href="#t-layers"/><use href="#sun" x="11" y="7" width="10" height="10"/></svg></button><button aria-label="图层全开"><svg viewBox="0 0 20 20"><use href="#t-layers"/><use href="#sun" x="3" y="7" width="9" height="9"/><use href="#sun" x="11" y="6" width="9" height="9"/></svg></button><hr>
				<button aria-label="特性刷"><svg viewBox="0 0 20 20"><use href="#t-pair"/><path d="M12 13l6-9" stroke="#f0b44a" stroke-width="3"/></svg></button><button aria-label="填色"><svg viewBox="0 0 20 20"><use href="#t-pair"/><path d="M9 10l6-6 4 8-7 4z" fill="#6c171c"/></svg></button><button aria-label="红点"><svg viewBox="0 0 20 20"><use href="#t-pair"/><circle cx="13" cy="13" r="3" fill="#d12e2e"/></svg></button><button aria-label="画笔"><svg viewBox="0 0 20 20"><use href="#t-pair"/><path d="M11 15l8-11" stroke="#62632d" stroke-width="3"/><path d="M14 17h5" stroke="#d12e2e"/></svg></button><button aria-label="定位"><svg viewBox="0 0 20 20"><use href="#t-pair"/><path d="M12 11h6l-3 5z" fill="#d12e2e"/></svg></button><button aria-label="清理"><svg viewBox="0 0 20 20"><use href="#t-pair"/><path d="M14 3h2v8l3 7h-7l2-7z" fill="#dcaa29"/></svg></button><hr>
				<button aria-label="标注"><svg><use href="#t-blue"/></svg></button><button aria-label="边界"><svg><use href="#t-rects"/></svg></button><button aria-label="地图"><svg><use href="#t-map"/></svg></button><hr>
				<button aria-label="COM"><svg><use href="#t-com"/></svg></button><button aria-label="查询"><svg><use href="#t-find"/></svg></button><hr>
				<button aria-label="表格"><svg><use href="#t-text"/></svg></button><button aria-label="列表"><svg><use href="#t-rects"/></svg></button><button aria-label="统计"><svg><use href="#t-nodes"/></svg></button><hr>
				<button aria-label="导出"><svg><use href="#t-down"/></svg></button><button aria-label="导入"><svg><use href="#t-orange"/></svg></button><button aria-label="转换"><svg><use href="#t-house"/></svg></button><button aria-label="输出"><svg><use href="#t-ab"/></svg></button><hr>
				<button aria-label="文字转换"><svg><use href="#t-ab"/></svg></button><button aria-label="说明"><svg><use href="#t-help"/></svg></button>
			</div>
		</aside>
	</main>

	<footer>
		<div class="statusbar">
			<nav class="layouts">
				<button aria-label="布局菜单"><svg width="19" height="16"><use href="#bars"/></svg></button>
				<a href="#" class="active">模型</a><a href="#">布局1</a><svg width="10" height="20"><use href="#slash"/></svg><a href="#">布局2</a><svg width="10" height="20"><use href="#slash"/></svg>
				<button aria-label="新建布局"><svg width="17" height="17"><use href="#plus"/></svg></button><svg width="10" height="20"><use href="#slash"/></svg>
			</nav>
			<div class="status">
				<div class="seg"><button class="model-btn">模型</button></div>
				<div class="seg"><button aria-label="栅格"><svg viewBox="0 0 20 20"><path d="M5 1v18M10 1v18M15 1v18M1 5h18M1 10h18M1 15h18" stroke="#b4bac1" stroke-width="1.500"/></svg></button><button aria-label="捕捉"><svg viewBox="0 0 20 20"><path d="M3 4h15M3 9h15M3 14h15" stroke="#cfd3d8" stroke-width="2" stroke-dasharray="2 3"/></svg></button><svg class="caret"><use href="#caret"/></svg></div>
				<div class="seg snap"><button class="on" aria-label="动态输入"><svg viewBox="0 0 20 20"><path d="M5 2v8M1 6h8" stroke="#fff" stroke-width="1.500"/><path d="M8 11h11v5H8z" fill="#fff"/></svg></button><button class="on" aria-label="正交"><svg viewBox="0 0 20 20"><path d="M2 1v17h17M2 12h6v6" fill="none" stroke="#c6e8fb" stroke-width="1.500"/></svg></button><button aria-label="极轴"><svg viewBox="0 0 20 20"><path d="M16 6a8 8 0 1 0 1 6M9 11l9-10M9 11h10" fill="none" stroke="#adb4bb" stroke-width="1.500"/></svg></button><svg class="caret"><use href="#caret"/></svg><button aria-label="等轴测"><svg viewBox="0 0 20 20"><path d="M9 1v18M5 4l10 12" stroke="#949ca5" stroke-width="1.500"/><path d="M9 10v8" stroke="#a95653" stroke-width="1.500"/></svg></button><svg class="caret"><use href="#caret"/></svg><button class="on" aria-label="对象捕捉追踪"><svg viewBox="0 0 20 20"><path d="M18 2L2 16h17" fill="none" stroke="#d5edfb" stroke-width="1.500"/></svg></button><button class="on" aria-label="对象捕捉"><svg viewBox="0 0 20 20"><path d="M4 4h14v14H4z" fill="none" stroke="#d5edfb" stroke-width="1.500"/><path d="M1 1h6v6H1z" fill="#6fa0c8" stroke="#d5edfb" stroke-width="1.500"/></svg></button><svg class="caret"><use href="#caret"/></svg></div>
				<div class="seg"><button aria-label="线宽"><svg viewBox="0 0 20 20"><path d="M1 3h9M1 8h11M1 12h11M1 17h18" stroke="#dfe3e6" stroke-width="2.500"/><path d="M12 3h7M13 10h6" stroke="#9aa2ab" stroke-width="1.500"/></svg></button></div>
				<div class="seg"><button class="on" aria-label="注释可见性"><svg viewBox="0 0 20 20"><use href="#annot" x="-2"/><circle cx="16" cy="4" r="2.500" fill="none" stroke="#d5edfb"/></svg></button><button class="on" aria-label="自动缩放"><svg viewBox="0 0 20 20"><use href="#annot" x="-2"/><path d="M16 0l-4 6h4l-2 5 6-7h-4z" fill="#fff"/></svg></button><button aria-label="注释比例"><svg viewBox="0 0 20 20"><use href="#annot"/></svg></button><button class="scale">1:1<svg class="caret"><use href="#caret"/></svg></button></div>
				<div class="seg"><button aria-label="切换工作空间"><svg viewBox="0 0 20 20"><circle cx="10" cy="10" r="5" fill="none" stroke="#e5e8eb" stroke-width="4"/><path d="M10 0v20M0 10h20M3 3l14 14M17 3L3 17" stroke="#e5e8eb" stroke-width="2.500"/><circle cx="10" cy="10" r="3.500" fill="#3a4552"/></svg></button><svg class="caret wide"><use href="#caret"/></svg><button aria-label="注释监视器"><svg><use href="#plus"/></svg></button></div>
				<div class="seg"><button aria-label="隔离对象"><svg viewBox="0 0 20 20"><path d="M1 1h7v7H1zM10 12l4 7H6z" fill="none" stroke="#b4bac1" stroke-width="1.300"/><circle cx="15" cy="9" r="4" fill="none" stroke="#b4bac1" stroke-width="1.300"/></svg></button></div>
				<div class="seg"><button aria-label="硬件加速"><svg viewBox="0 0 20 20"><circle cx="10" cy="10" r="9.500" fill="#1492ea"/><path d="M10 5v6M10 13v2.500" stroke="#fff" stroke-width="2.500"/></svg></button><button aria-label="性能"><svg viewBox="0 0 20 20"><path d="M1 1h18v17H1z" fill="#d6d8da"/><path d="M1 12l6-7 5 6 6-8" stroke="#7a8188" fill="none" stroke-width="1.500"/><path d="M15 9l5 10h-9z" fill="#efaa7c"/></svg></button></div>
				<div class="seg"><button aria-label="全屏显示"><svg viewBox="0 0 20 20"><path d="M1 3h18v14H1z" fill="none" stroke="#aeb5bc" stroke-width="1.500"/><path d="M12 5h5v4zM3 11v4h5z" fill="#dfe2e5"/></svg></button></div>
				<div class="seg"><button aria-label="自定义"><svg><use href="#bars"/></svg></button></div>
			</div>
		</div>

		<div class="taskbar">
			<button class="weather">
				<svg width="28" height="26" viewBox="0 0 28 26"><circle cx="19" cy="9" r="8" fill="#f7a82c"/><path d="M6 25q-6-1-5-7 1-4 5-4 1-6 7-6 5 0 7 5 7 1 7 6t-6 6z" fill="#c6dcf6"/></svg>
				<span><b>16°C</b><br>多云</span>
			</button>
			<div class="apps">
				<button aria-label="开始"><svg width="28" height="28" viewBox="0 0 28 28"><defs><linearGradient id="win" x2="1" y2="1"><stop stop-color="#86ebff"/><stop offset="1" stop-color="#1f9fee"/></linearGradient></defs><path d="M1 1h12v12H1zM15 1h12v12H15zM1 15h12v12H1zM15 15h12v12H15z" fill="url(#win)"/></svg></button>
				<label class="search"><svg width="18" height="18" viewBox="0 0 18 18"><circle cx="7" cy="7" r="5.500" fill="none" stroke="#e8e8ea" stroke-width="2"/><path d="M11 11l6 6" stroke="#e8e8ea" stroke-width="2"/></svg><input type="text" placeholder="搜索" aria-label="搜索"><svg width="56" height="30" viewBox="0 0 56 30"><path d="M1 28Q3 6 20 3q12-2 17 2 14-1 18 12 1 9-4 12z" fill="#42569a"/><path d="M3 27Q18 8 30 16q9-14 21-2-8 10-23 9-8 7-25 4z" fill="#728eb8"/><path d="M8 24q11-14 22-3l-9 6z" fill="#e5d2ad"/><path d="M31 16q9-12 18-3-5 9-16 9z" fill="#5bbf94"/><path d="M27 20q3-8 6-2l-2 5z" fill="#f2dab0"/><path d="M2 28q20-5 50-1l-5 3H5z" fill="#29305e"/><path d="M10 14v2M18 8v2M26 9v2M37 8v2M44 11v2" stroke="#d7f1e5" stroke-width="2"/></svg></label>
				<button aria-label="任务视图"><svg width="30" height="28" viewBox="0 0 30 28"><path d="M1 9h19v17H1z" fill="#616165"/><path d="M8 2h20v18H8z" fill="#eeeef0"/><path d="M8 9h12v11H8z" fill="#a3a3a7"/></svg></button>
				<button aria-label="文件资源管理器"><svg width="30" height="28" viewBox="0 0 30 28"><path d="M1 2h9l3 3h15v10H1z" fill="#e8a91b"/><path d="M1 7h28v20H1z" fill="#fbd551"/><path d="M6 27v-7q0-2 2-2h14q2 0 2 2v7z" fill="#1271c1"/></svg></button>
				<button aria-label="Edge"><svg width="30" height="30" viewBox="0 0 30 30"><circle cx="15" cy="15" r="14" fill="#1685cc"/><path d="M2 12Q5 1 16 1q13 1 13 13-2 7-9 6-3-1-1-4 0-6-6-7-7 0-11 3z" fill="#35c3af"/><path d="M12 12q-7 10 3 15 7 2 12-4-9 3-13-3-2-3 0-6z" fill="#1654a4"/><path d="M1 16q0-9 11-8 7 1 7 8-7-7-9 1-1 7 5 12Q3 29 1 16z" fill="#3aa4e0"/></svg></button>
				<button aria-label="Microsoft Store"><svg width="28" height="28" viewBox="0 0 28 28"><path d="M8 7V2h12v5" fill="none" stroke="#45a8df" stroke-width="2"/><path d="M1 5h26v20q0 2-2 2H3q-2 0-2-2z" fill="#f4f4f6"/><path d="M8 10h5v5H8z" fill="#e94f31"/><path d="M15 10h5v5h-5z" fill="#77b72a"/><path d="M8 17h5v5H8z" fill="#289de2"/><path d="M15 17h5v5h-5z" fill="#f6b917"/></svg></button>
				<button class="running" aria-label="AutoCAD 2024"><svg width="25" height="28" viewBox="0 0 25 28"><path d="M0 3q0-3 3-3h22v25q0 3-3 3H3q-3 0-3-3z" fill="#a30b37"/><path d="M0 3l4-3v21l-4 5z" fill="#ec91a8"/><path d="M4 0h21v20H4z" fill="#df174f"/><path d="M10 15l3.500-10L17 15M11 12h5" stroke="#fff" stroke-width="2.200" fill="none"/><path d="M8 22h3M8 25h3M8 22v3M13 25v-3h3v3M18 22h3v3h-3z" stroke="#fff" fill="none"/></svg></button>
			</div>
			<div class="tray">
				<button aria-label="隐藏的图标"><svg width="14" height="12" viewBox="0 0 14 12"><path d="M2 9l5-6 5 6" fill="none" stroke="#eee" stroke-width="1.700"/></svg></button>
				<button>中</button>
				<button aria-label="QQ"><svg width="19" height="19" viewBox="0 0 19 19"><rect width="19" height="19" rx="3" fill="#438ee9"/><circle cx="9" cy="9" r="5" fill="none" stroke="#fff" stroke-width="1.700"/><path d="M10 11l4 4" stroke="#fff" stroke-width="1.700"/></svg></button>
				<button class="net" aria-label="网络和音量"><svg width="20" height="18" viewBox="0 0 20 18"><path d="M1 7q9-9 18 0M4 10q6-6 12 0M7 13q3-3 6 0" fill="none" stroke="#ededed" stroke-width="1.600"/><circle cx="10" cy="15.500" r="1.600" fill="#eee"/></svg><svg width="18" height="18" viewBox="0 0 18 18"><path d="M1 6h3l5-4v14l-5-4H1z" fill="none" stroke="#ededed" stroke-width="1.500"/><path d="M11 6q2 3 0 6M13 3q5 6 0 12" fill="none" stroke="#ededed" stroke-width="1.500"/></svg><svg width="20" height="18" viewBox="0 0 20 18"><path d="M2 5h14q1 0 1 1v9q0 1-1 1H3q-1 0-1-1zM17 8h2v5h-2z" fill="#eee"/><path d="M4 0v9M1 4h6" stroke="#eee" stroke-width="2"/></svg></button>
				<button class="clock">10:37<br>2024/11/17</button>
				<button aria-label="通知"><svg width="16" height="18" viewBox="0 0 16 18"><path d="M1 14h14l-2-3V6q0-5-5-5T3 6v5zM6 14q2 5 4 0" fill="none" stroke="#eee" stroke-width="1.500"/></svg></button>
			</div>
		</div>
	</footer>

	<!-- floating widgets -->
	<div class="timer">00:01</div>
	<div class="monitor">
		<svg width="20" height="20" viewBox="0 0 20 20"><path d="M10 0l9 3v7q0 6-9 10Q1 16 1 10V3z" fill="#23c785"/><path d="M5 10l4 3 6-6" stroke="#fff" stroke-width="2" fill="none"/></svg>
		<div class="usage"><b>24</b><small>%</small></div>
		<div class="rate up"><b>0.0</b><span>K/s</span></div>
		<div class="rate down"><b>0.0</b><span>K/s</span></div>
		<hr>
		<svg width="22" height="20" viewBox="0 0 22 20"><path d="M2 4h4l2-3h6l2 3h4q1 0 1 1v12q0 2-2 2H3q-2 0-2-2V5q0-1 1-1z" fill="none" stroke="#b5b9c0" stroke-width="1.500"/><circle cx="11" cy="11" r="3" fill="#fff"/></svg>
	</div>
</body>
</html>
```
FILE: styles.css
```css
*, *::before, *::after {
	box-sizing: border-box;
}
body {
	margin: 0;
	min-height: 100vh;
	display: flex;
	flex-direction: column;
	background: #262d37;
	color: #c9ced4;
	font: 14px/18px "Noto Sans", "Noto Sans CJK SC", sans-serif;
	overflow: hidden;
}
a {
	color: inherit;
	text-decoration: none;
}
p, h2 {
	margin: 0;
}
button {
	display: flex;
	align-items: center;
	justify-content: center;
	padding: 0;
	border: none;
	background: none;
	color: inherit;
	font: inherit;
	white-space: nowrap;
}
input, select {
	min-width: 0;
	border: none;
	background: none;
	color: inherit;
	font: inherit;
	appearance: none;
	outline: none;
}
svg {
	flex: none;
}
button svg {
	width: 20px;
	height: 20px;
}
svg.caret, button svg.caret {
	width: 10px;
	height: 10px;
}
.dim {
	opacity: .5;
}
.defs {
	position: absolute;
}

/* title bar */
.titlebar {
	display: flex;
	align-items: center;
	height: 32px;
}
.quick {
	display: flex;
	align-items: center;
	gap: 7px;
	width: 350px;
	padding-left: 18px;
}
.quick .logo svg {
	width: 26px;
	height: 26px;
}
.quick > .caret {
	margin: 0 3px 0 -4px;
}
.title {
	flex: 1;
	text-align: center;
	color: #e1e4e7;
}
.infocenter {
	display: flex;
	align-items: center;
	gap: 6px;
	width: 496px;
}
.infocenter .caret {
	margin: 0 -2px;
}
.infocenter .push {
	margin-left: auto;
	margin-right: 3px;
}
.help-search {
	width: 200px;
	height: 24px;
	padding: 0 4px;
	background: #505a6c;
}
.help-search::placeholder {
	color: #b7bdc7;
	font-size: 13px;
	font-style: italic;
}
.login {
	gap: 4px;
}
.vline {
	width: 1px;
	height: 20px;
	margin: 0 3px 0 8px;
	background: #59616d;
}
.winctl {
	display: flex;
	justify-content: space-between;
	width: 224px;
	padding: 0 16px 0 88px;
}
.winctl svg, .docctl svg {
	width: 14px;
	height: 14px;
}

/* menus and ribbon tabs */
.menubar {
	display: flex;
	align-items: center;
	height: 23px;
	padding: 1px 9px 0 13px;
	border-bottom: 1px solid #434c58;
	color: #b3b9c1;
	white-space: nowrap;
}
.menubar a {
	margin-right: 22px;
}
.menubar .tight {
	margin-right: 12px;
}
.docctl {
	display: flex;
	gap: 23px;
	margin-left: auto;
}
.tabs {
	display: flex;
	align-items: flex-end;
	height: 28px;
	padding-left: 6px;
	color: #b0b7bf;
	white-space: nowrap;
}
.tabs a {
	padding: 3px 10px 2px 11px;
}
.tabs .active {
	background: #424d5a;
	color: #e9ecef;
}
.collapse {
	margin: 0 0 6px 22px;
}
.collapse svg {
	width: 30px;
	height: 10px;
}

/* ribbon */
.ribbon {
	display: flex;
	height: 111px;
	border-left: 2px solid #2b333e;
	background: #424d5a;
	color: #d9dde1;
}
.panel {
	display: flex;
	flex-direction: column;
	border-right: 2px solid #333c48;
}
.body {
	display: flex;
	flex: 1;
	padding: 5px 4px 0;
}
.panel h2 {
	display: flex;
	align-items: center;
	justify-content: center;
	gap: 8px;
	height: 22px;
	font-size: 14px;
	font-weight: normal;
}
.panel h2 .caret {
	width: 12px;
	height: 12px;
}
.big {
	flex-direction: column;
	justify-content: flex-start;
	width: 46px;
	line-height: 18px;
}
.big svg {
	width: 38px;
	height: 38px;
	margin: 1px 0 5px;
}
.big .caret {
	margin: 0;
}
.rows button {
	gap: 5px;
	height: 27px;
	justify-content: flex-start;
}
.rows .caret {
	margin-left: 7px;
}
.rows .on {
	width: 27px;
	height: 25px;
	margin-left: -4px;
	padding-left: 3px;
	border: 1px solid #6fb2e4;
	background: #2b5d87;
}
.r-icons {
	margin-left: 7px;
}
.r-icons .caret {
	margin-left: 0;
}
.p-draw { width: 238px; }
.p-draw .body { padding-left: 2px; }
.p-modify { width: 254px; }
.p-modify .body { gap: 13px; padding-left: 8px; }
.p-modify .r-wide .caret { margin-left: 3px; }
.p-annot { width: 176px; }
.p-annot .body { padding-left: 6px; }
.p-annot .big { width: 48px; }
.p-annot .rows { margin-left: 6px; }
.p-annot .caret { margin-left: 2px; }
.p-annot .big .caret { margin-left: 0; }
.p-layer { width: 284px; }
.p-layer .combo { margin-bottom: 3px; }
.p-block { width: 151px; }
.p-block .rows { margin-left: 6px; }
.p-block .rows .caret { margin-left: 3px; }
.p-props { width: 275px; }
.p-group { width: 76px; }
.p-util { width: 86px; }
.p-clip { width: 97px; }
.p-view { width: 72px; }
.p-view { border: none; }
.p-view .big { width: 62px; }
.p-group .rows { margin-left: 5px; }
.p-util .big { width: 50px; }
.p-util .rows { margin-left: 4px; }
.p-clip .rows { margin-left: 6px; }
.p-view h2, .p-util h2 {
	white-space: nowrap;
}
.p-layer .big {
	width: 44px;
}
.p-block .big, .p-props .big, .p-group .big {
	width: 44px;
}
.layer-tools {
	flex: 1;
}
.combo {
	display: flex;
	align-items: center;
	gap: 7px;
	height: 24px;
	padding: 0 1px 0 5px;
	background: #566177;
	border: 1px solid #3a4452;
	color: #e4e7eb;
}
.combo select {
	flex: 1;
	padding: 0;
}
.combo::after {
	content: "";
	border: 4px solid transparent;
	border-top: 5px solid #e4e7ea;
	border-bottom: none;
}
.swatch {
	width: 17px;
	height: 17px;
	background: #fff;
}
.line {
	width: 72px;
	height: 2px;
	margin-right: -5px;
	background: #e3e6e9;
}
.iconrow {
	display: flex;
	gap: 7px;
	height: 27px;
	padding-left: 3px;
}
.iconrow button {
	gap: 4px;
}
.prop-grid {
	flex: 1;
	display: grid;
	grid-template-columns: 20px 1fr;
	grid-template-rows: repeat(3, 24px);
	gap: 3px;
	align-items: center;
	padding: 1px 0 0 1px;
}
.prop-grid > svg {
	width: 19px;
	height: 19px;
}
.panel .corner {
	justify-content: space-between;
	padding: 0 2px 0 108px;
}
.corner span {
	display: flex;
	align-items: center;
	gap: 8px;
}

/* file tabs */
.filetabs {
	display: flex;
	align-items: center;
	gap: 9px;
	height: 31px;
	padding-left: 18px;
}
.filetabs > button svg {
	width: 19px;
	height: 16px;
}
.filetab {
	display: flex;
	align-items: center;
	gap: 8px;
	height: 29px;
	align-self: flex-end;
	padding: 0 14px 0 17px;
	background: #424d5a;
	clip-path: polygon(10px 0, 100% 0, calc(100% - 10px) 100%, 0 100%);
	color: #fff;
	font-weight: bold;
}
.filetab svg {
	width: 12px;
	height: 12px;
}

/* drawing area */
main {
	flex: 1;
	display: flex;
	background: #424d5a;
}
.workspace {
	flex: 1;
	display: flex;
	flex-direction: column;
}
.doctabs {
	display: flex;
	align-items: center;
	gap: 8px;
	height: 35px;
	padding: 5px 0 0 10px;
	color: #e2e5e8;
}
.doctabs a {
	display: flex;
	align-items: center;
	gap: 6px;
	margin: 0 11px 0 10px;
}
.doctabs .current {
	align-self: flex-end;
	width: 113px;
	height: 29px;
	margin: 0;
	padding-left: 5px;
	background: #e3e4e4;
	color: #33383d;
}
.doctabs button {
	width: 24px;
	height: 24px;
	border-radius: 12px;
	background: #364150;
}
.doctabs button svg {
	width: 10px;
	height: 10px;
}
.canvas {
	position: relative;
	flex: 1;
	overflow: hidden;
	background: #000;
}
.model {
	position: absolute;
	width: 100%;
	height: 100%;
}
.viewlabel {
	position: absolute;
	left: 2px;
	top: 3px;
	color: #c8c8c8;
}
.dwg-title {
	position: absolute;
	left: 719px;
	top: 20px;
	color: #3be64a;
	font: 58px/66px "Liberation Serif", "Noto Sans CJK SC", serif;
	font-weight: 300;
	white-space: nowrap;
}
.dwg-title span {
	font-size: 44px;
}
.dwg-sub {
	position: absolute;
	left: 864px;
	top: 92px;
	color: #d012d0;
	font: 50px/58px "Liberation Serif", serif;
}
.viewcube {
	position: absolute;
	top: 16px;
	right: 12px;
	display: grid;
	grid-template-columns: 24px 92px 24px;
	grid-template-rows: 20px 96px 20px;
	place-items: center;
	padding: 0 2px;
	color: #9d9d9d;
	font-size: 19px;
	line-height: 20px;
}
.viewcube::before {
	content: "";
	position: absolute;
	top: 6px;
	left: 10px;
	width: 124px;
	height: 124px;
	border: 13px solid #333;
	border-radius: 50%;
}
.viewcube b {
	position: relative;
}
.viewcube .n, .viewcube .s {
	grid-column: 2;
}
.viewcube .w {
	grid-column: 1;
}
.viewcube .top {
	position: relative;
	width: 54px;
	height: 54px;
	border: 10px solid #9e9e9e;
	background: #939a9a;
	color: #41484d;
	font-size: 30px;
}
.wcs {
	position: absolute;
	top: 173px;
	right: 59px;
	width: 52px;
	height: 20px;
	padding-right: 14px;
	border: 1px solid #817f85;
	border-radius: 4px;
	background: #918f95;
	color: #5b5a5f;
	font: 12px "Liberation Sans", sans-serif;
}
.navbar {
	position: absolute;
	top: 217px;
	right: 3px;
	display: flex;
	flex-direction: column;
	align-items: center;
	justify-content: space-between;
	width: 35px;
	height: 234px;
	padding: 18px 0;
	border-radius: 3px;
	background: #4b4b4b;
}
.navbar svg {
	width: 26px;
	height: 26px;
	fill: none;
	stroke: #343434;
	stroke-width: 1.5px;
}
.navbar i {
	width: 3px;
	height: 3px;
	background: #303030;
}
/* big video caption with a black outline */
.caption {
	position: absolute;
	top: 17px;
	left: 0;
	right: 0;
	padding-left: 60px;
	text-align: center;
	color: #ffe500;
	font: 900 144px/166px "Noto Sans CJK SC", sans-serif;
	-webkit-text-stroke: 24px #000;
	paint-order: stroke fill;
}
.caption .latin {
	font-size: 148px;
	-webkit-text-stroke: 6px #ffe500;
	text-shadow: 9px 0 #000, -9px 0 #000, 0 9px #000, 0 -9px #000, 7px 7px #000, -7px 7px #000, 7px -7px #000, -7px -7px #000;
}
.command {
	position: absolute;
	left: 29%;
	bottom: 0;
	width: 777px;
	color: #929b22;
	font: 14px/18px "Liberation Mono", "Noto Sans CJK SC", monospace;
}
.command p {
	padding: 0 0 3px 76px;
}
.cmdline {
	display: flex;
	align-items: center;
	height: 28px;
	background: #2a3038;
}
.grip {
	margin: 0 4px 0 9px;
	height: 18px;
	border-left: 2px dotted #8d939a;
}
.cmdline button {
	margin-right: 11px;
}
.cmdline button svg {
	width: 16px;
	height: 16px;
}
.cmdline button + button {
	margin-right: 8px;
}
.cmdinput {
	flex: 1;
	display: flex;
	align-items: center;
	gap: 3px;
	height: 27px;
	padding: 0 4px;
	background: #bababa;
}
.cmdinput input {
	flex: 1;
	padding: 0 6px;
	font: italic 15px "Noto Sans", "Noto Sans CJK SC", sans-serif;
}
.cmdinput input::placeholder {
	color: #747474;
}

/* plugin toolbars */
.sidebars {
	display: flex;
	align-items: flex-start;
	gap: 4px;
	padding: 5px 1px 0 3px;
	height: 763px;
	overflow: hidden;
}
.toolbar {
	display: flex;
	flex-direction: column;
	align-items: center;
	width: 28px;
	padding-bottom: 1px;
	border: 1px solid #2a323d;
	background: #3a4452;
}
.handle {
	width: 16px;
	height: 4px;
	margin: 2px 0;
	background: #8a919b;
}
.toolbar button {
	height: 25px;
}
.toolbar svg {
	width: 19px;
	height: 19px;
}
.toolbar hr {
	width: 24px;
	height: 2px;
	margin: 1px 0;
	border: none;
	background: #aab0b8;
}

/* status bar */
.statusbar {
	display: flex;
	height: 41px;
	border-top: 5px solid #424d5a;
	border-bottom: 2px solid #3d4349;
}
.layouts {
	flex: 1;
	display: flex;
	align-items: center;
	gap: 10px;
	height: 28px;
	padding-left: 18px;
}
.layouts .active {
	padding: 5px 18px;
	background: #424d5a;
	clip-path: polygon(10px 0, 100% 0, calc(100% - 10px) 100%, 0 100%);
	color: #fff;
	font-weight: bold;
}
.layouts .active + a {
	margin-left: -4px;
}
.layouts button svg {
	width: 18px;
	height: 17px;
}
.status {
	display: flex;
	gap: 5px;
	padding: 3px 0;
}
.seg {
	display: flex;
	align-items: center;
	height: 27px;
	background: #3a4552;
}
.seg button {
	width: 26px;
	height: 27px;
}
.seg .caret {
	margin: 0 5px;
}
.seg .caret.wide {
	margin: 0 6px;
}
.seg .on {
	background: #6a9cc8;
	border-right: 1px solid #3a4552;
}
.seg .model-btn {
	width: 32px;
	font-weight: bold;
	color: #e7eaed;
}
.seg .scale {
	width: 38px;
	font-size: 13px;
	font-weight: bold;
}
.seg .scale .caret {
	margin: 0 0 0 4px;
}

/* taskbar */
.taskbar {
	display: grid;
	grid-template-columns: 1fr auto 1fr;
	align-items: center;
	height: 50px;
	background: linear-gradient(90deg, #232424 25%, #28252d 45%, #28252d 60%, #222324 85%);
	color: #ececee;
}
.weather {
	justify-self: start;
	gap: 8px;
	padding-left: 22px;
	text-align: left;
	font-size: 13px;
}
.weather b {
	font-weight: 500;
}
.weather svg {
	width: 28px;
	height: 26px;
}
.apps {
	display: flex;
	align-items: center;
	margin-left: -2px;
}
.apps button {
	width: 49px;
	height: 45px;
}
.apps button svg {
	width: 28px;
	height: 28px;
}
.apps > button:first-child {
	width: 56px;
}
.search {
	display: flex;
	align-items: center;
	gap: 12px;
	width: 248px;
	height: 37px;
	margin-right: 2px;
	padding: 0 5px 0 13px;
	border: 1px solid #57565e;
	border-radius: 19px;
	background: #45444c;
}
.search input {
	flex: 1;
	padding: 0;
	font-size: 16px;
}
.search input::placeholder {
	color: #d5d5d9;
}
.apps .running {
	position: relative;
	border-radius: 5px;
	background: #36333c;
}
.running::after {
	content: "";
	position: absolute;
	bottom: 0;
	width: 18px;
	height: 4px;
	border-radius: 2px;
	background: #e3927c;
}
.tray {
	display: flex;
	align-items: center;
	justify-self: end;
	gap: 22px;
	padding-right: 21px;
}
.tray svg {
	width: auto;
	height: auto;
}
.net {
	gap: 8px;
	margin-left: 1px;
}
.clock {
	justify-content: flex-end;
	margin-right: -12px;
	margin-left: -4px;
	font-size: 13px;
	text-align: right;
}

/* floating widgets */
.timer {
	position: absolute;
	top: 35px;
	right: 155px;
	width: 58px;
	height: 58px;
	border: 4px solid #f4f9ff;
	border-radius: 50%;
	background: linear-gradient(200deg, #2f86ee, #55b6ff);
	color: #e8f4ff;
	font: 15px/50px "Liberation Sans", sans-serif;
	text-align: center;
}
.monitor {
	position: absolute;
	top: 752px;
	right: 8px;
	display: flex;
	flex-direction: column;
	align-items: center;
	width: 48px;
	height: 202px;
	padding-top: 10px;
	border-radius: 8px 8px 22px 22px;
	background: #262c38;
	color: #dfe2e6;
	line-height: 13px;
}
.usage {
	display: flex;
	align-items: center;
	justify-content: center;
	width: 44px;
	height: 44px;
	margin: 10px 0 11px;
	border: 2px solid #434956;
	border-bottom-color: #5fc7b0;
	border-radius: 50%;
	color: #fff;
	font-size: 18px;
}
.usage small {
	color: #7d838c;
	font-size: 9px;
}
.rate {
	position: relative;
	display: flex;
	flex-direction: column;
	margin: 0 0 6px 10px;
	font-size: 12px;
}
.rate b {
	font-weight: 600;
}
.rate span {
	color: #9a9fa8;
	font-size: 11px;
}
.rate::before {
	content: "";
	position: absolute;
	left: -12px;
	top: 7px;
	width: 4px;
	height: 6px;
	border-radius: 2px;
	background: #3c9ad6;
}
.down::before {
	background: #2fae79;
}
.monitor hr {
	width: 28px;
	margin: 0 0 7px;
	border: none;
	border-top: 1px solid #434956;
}
```
